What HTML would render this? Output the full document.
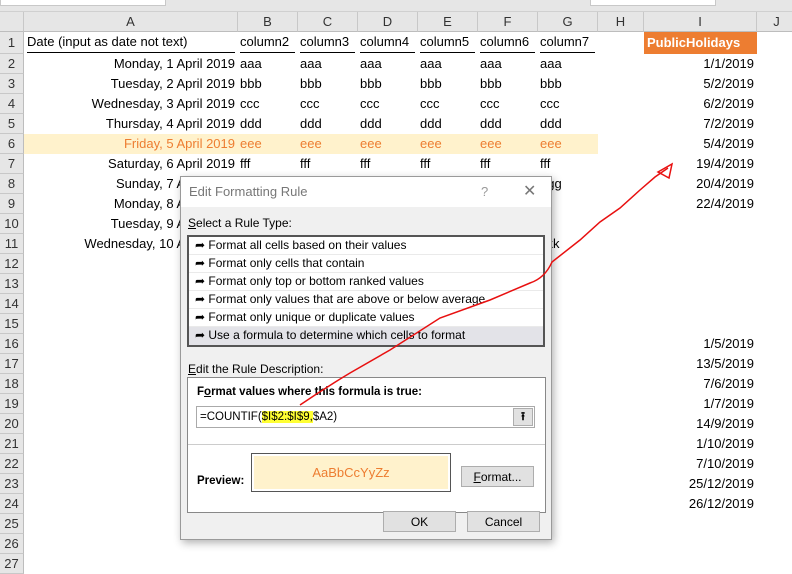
<!DOCTYPE html>
<html><head><meta charset="utf-8"><style>
*{margin:0;padding:0;box-sizing:border-box}
body{width:792px;height:563px;overflow:hidden;background:#fff;font-family:"Liberation Sans",Calibri,sans-serif;font-size:13px;color:#000;position:relative}
.top{position:absolute;left:0;top:0;width:792px;height:12px;background:#e6e6e6;border-bottom:1px solid #d0d0d0}
.top div{position:absolute;top:0;height:6px;background:#fff;border:1px solid #c8c8c8;border-top:none}
.hdr{position:absolute;top:12px;height:20px;background:#e6e6e6;border-right:1px solid #c8c8c8;border-bottom:1px solid #bdbdbd;text-align:center;line-height:20px;color:#333;font-size:13px}
.rh{position:absolute;left:0;width:24px;background:#e6e6e6;border-bottom:1px solid #c8c8c8;border-right:1px solid #bdbdbd;text-align:center;color:#333;font-size:13px}
.c{position:absolute;white-space:nowrap;font-size:13px;line-height:20px}
.r{text-align:right}
.dlg{position:absolute;left:180px;top:176px;width:372px;height:364px;background:#f0f0f0;border:1px solid #9a9a9a;box-shadow:2px 3px 8px rgba(0,0,0,.3)}
.dlg .tb{height:30px;background:#fff;color:#777;font-size:13px;line-height:30px;padding-left:8px}
.lst{position:absolute;left:6px;top:58px;width:358px;height:112px;border:2px solid #555;background:#fff}
.lst div{height:18px;line-height:17px;padding-left:6px;border-bottom:1px solid #eaeaea;font-size:12px}
.btn{position:absolute;background:#e1e1e1;border:1px solid #adadad;text-align:center;font-size:12px;line-height:20px}
</style></head><body>
<div class="top"><div style="left:0;width:166px"></div><div style="left:590px;width:126px"></div></div>
<div class="hdr" style="left:0;width:24px"></div>
<div class="hdr" style="left:24px;width:214px">A</div>
<div class="hdr" style="left:238px;width:60px">B</div>
<div class="hdr" style="left:298px;width:60px">C</div>
<div class="hdr" style="left:358px;width:60px">D</div>
<div class="hdr" style="left:418px;width:60px">E</div>
<div class="hdr" style="left:478px;width:60px">F</div>
<div class="hdr" style="left:538px;width:60px">G</div>
<div class="hdr" style="left:598px;width:46px">H</div>
<div class="hdr" style="left:644px;width:113px">I</div>
<div class="hdr" style="left:757px;width:40px">J</div>
<div class="rh" style="top:32px;height:22px;line-height:22px">1</div>
<div class="rh" style="top:54px;height:20px;line-height:20px">2</div>
<div class="rh" style="top:74px;height:20px;line-height:20px">3</div>
<div class="rh" style="top:94px;height:20px;line-height:20px">4</div>
<div class="rh" style="top:114px;height:20px;line-height:20px">5</div>
<div class="rh" style="top:134px;height:20px;line-height:20px">6</div>
<div class="rh" style="top:154px;height:20px;line-height:20px">7</div>
<div class="rh" style="top:174px;height:20px;line-height:20px">8</div>
<div class="rh" style="top:194px;height:20px;line-height:20px">9</div>
<div class="rh" style="top:214px;height:20px;line-height:20px">10</div>
<div class="rh" style="top:234px;height:20px;line-height:20px">11</div>
<div class="rh" style="top:254px;height:20px;line-height:20px">12</div>
<div class="rh" style="top:274px;height:20px;line-height:20px">13</div>
<div class="rh" style="top:294px;height:20px;line-height:20px">14</div>
<div class="rh" style="top:314px;height:20px;line-height:20px">15</div>
<div class="rh" style="top:334px;height:20px;line-height:20px">16</div>
<div class="rh" style="top:354px;height:20px;line-height:20px">17</div>
<div class="rh" style="top:374px;height:20px;line-height:20px">18</div>
<div class="rh" style="top:394px;height:20px;line-height:20px">19</div>
<div class="rh" style="top:414px;height:20px;line-height:20px">20</div>
<div class="rh" style="top:434px;height:20px;line-height:20px">21</div>
<div class="rh" style="top:454px;height:20px;line-height:20px">22</div>
<div class="rh" style="top:474px;height:20px;line-height:20px">23</div>
<div class="rh" style="top:494px;height:20px;line-height:20px">24</div>
<div class="rh" style="top:514px;height:20px;line-height:20px">25</div>
<div class="rh" style="top:534px;height:20px;line-height:20px">26</div>
<div class="rh" style="top:554px;height:20px;line-height:20px">27</div>

<div style="position:absolute;left:24px;top:134px;width:574px;height:20px;background:#fff2cc"></div>
<div style="position:absolute;left:644px;top:32px;width:113px;height:22px;background:#ed7d31"></div>
<div class="c" style="left:27px;top:32px;border-bottom:1px solid #000;width:208px">Date (input as date not text)</div>
<div class="c" style="left:240px;top:32px;border-bottom:1px solid #000;width:55px">column2</div>
<div class="c" style="left:300px;top:32px;border-bottom:1px solid #000;width:55px">column3</div>
<div class="c" style="left:360px;top:32px;border-bottom:1px solid #000;width:55px">column4</div>
<div class="c" style="left:420px;top:32px;border-bottom:1px solid #000;width:55px">column5</div>
<div class="c" style="left:480px;top:32px;border-bottom:1px solid #000;width:55px">column6</div>
<div class="c" style="left:540px;top:32px;border-bottom:1px solid #000;width:55px">column7</div>
<div class="c" style="left:647px;top:33px;color:#fff;font-weight:bold">PublicHolidays</div>

<div class="c r" style="left:24px;top:54px;width:211px">Monday, 1 April 2019</div>
<div class="c r" style="left:24px;top:74px;width:211px">Tuesday, 2 April 2019</div>
<div class="c r" style="left:24px;top:94px;width:211px">Wednesday, 3 April 2019</div>
<div class="c r" style="left:24px;top:114px;width:211px">Thursday, 4 April 2019</div>
<div class="c r" style="left:24px;top:134px;width:211px;color:#ed7d31">Friday, 5 April 2019</div>
<div class="c r" style="left:24px;top:154px;width:211px">Saturday, 6 April 2019</div>
<div class="c r" style="left:24px;top:174px;width:211px">Sunday, 7 April 2019</div>
<div class="c r" style="left:24px;top:194px;width:211px">Monday, 8 April 2019</div>
<div class="c r" style="left:24px;top:214px;width:211px">Tuesday, 9 April 2019</div>
<div class="c r" style="left:24px;top:234px;width:211px">Wednesday, 10 April 2019</div>

<div class="c" style="left:240px;top:54px">aaa</div><div class="c" style="left:300px;top:54px">aaa</div><div class="c" style="left:360px;top:54px">aaa</div><div class="c" style="left:420px;top:54px">aaa</div><div class="c" style="left:480px;top:54px">aaa</div><div class="c" style="left:540px;top:54px">aaa</div>
<div class="c" style="left:240px;top:74px">bbb</div><div class="c" style="left:300px;top:74px">bbb</div><div class="c" style="left:360px;top:74px">bbb</div><div class="c" style="left:420px;top:74px">bbb</div><div class="c" style="left:480px;top:74px">bbb</div><div class="c" style="left:540px;top:74px">bbb</div>
<div class="c" style="left:240px;top:94px">ccc</div><div class="c" style="left:300px;top:94px">ccc</div><div class="c" style="left:360px;top:94px">ccc</div><div class="c" style="left:420px;top:94px">ccc</div><div class="c" style="left:480px;top:94px">ccc</div><div class="c" style="left:540px;top:94px">ccc</div>
<div class="c" style="left:240px;top:114px">ddd</div><div class="c" style="left:300px;top:114px">ddd</div><div class="c" style="left:360px;top:114px">ddd</div><div class="c" style="left:420px;top:114px">ddd</div><div class="c" style="left:480px;top:114px">ddd</div><div class="c" style="left:540px;top:114px">ddd</div>
<div class="c" style="left:240px;top:134px;color:#ed7d31">eee</div><div class="c" style="left:300px;top:134px;color:#ed7d31">eee</div><div class="c" style="left:360px;top:134px;color:#ed7d31">eee</div><div class="c" style="left:420px;top:134px;color:#ed7d31">eee</div><div class="c" style="left:480px;top:134px;color:#ed7d31">eee</div><div class="c" style="left:540px;top:134px;color:#ed7d31">eee</div>
<div class="c" style="left:240px;top:154px">fff</div><div class="c" style="left:300px;top:154px">fff</div><div class="c" style="left:360px;top:154px">fff</div><div class="c" style="left:420px;top:154px">fff</div><div class="c" style="left:480px;top:154px">fff</div><div class="c" style="left:540px;top:154px">fff</div>
<div class="c" style="left:540px;top:174px">ggg</div>
<div class="c" style="left:540px;top:234px">kkk</div>

<div class="c r" style="left:644px;top:54px;width:110px">1/1/2019</div>
<div class="c r" style="left:644px;top:74px;width:110px">5/2/2019</div>
<div class="c r" style="left:644px;top:94px;width:110px">6/2/2019</div>
<div class="c r" style="left:644px;top:114px;width:110px">7/2/2019</div>
<div class="c r" style="left:644px;top:134px;width:110px">5/4/2019</div>
<div class="c r" style="left:644px;top:154px;width:110px">19/4/2019</div>
<div class="c r" style="left:644px;top:174px;width:110px">20/4/2019</div>
<div class="c r" style="left:644px;top:194px;width:110px">22/4/2019</div>
<div class="c r" style="left:644px;top:334px;width:110px">1/5/2019</div>
<div class="c r" style="left:644px;top:354px;width:110px">13/5/2019</div>
<div class="c r" style="left:644px;top:374px;width:110px">7/6/2019</div>
<div class="c r" style="left:644px;top:394px;width:110px">1/7/2019</div>
<div class="c r" style="left:644px;top:414px;width:110px">14/9/2019</div>
<div class="c r" style="left:644px;top:434px;width:110px">1/10/2019</div>
<div class="c r" style="left:644px;top:454px;width:110px">7/10/2019</div>
<div class="c r" style="left:644px;top:474px;width:110px">25/12/2019</div>
<div class="c r" style="left:644px;top:494px;width:110px">26/12/2019</div>

<div class="dlg">
<div class="tb">Edit Formatting Rule<span style="position:absolute;left:300px;color:#999">?</span><span style="position:absolute;left:342px;color:#777;font-size:16px">✕</span></div>
<div style="position:absolute;left:7px;top:39px;font-size:12px"><u>S</u>elect a Rule Type:</div>
<div class="lst">
<div>➦ Format all cells based on their values</div>
<div>➦ Format only cells that contain</div>
<div>➦ Format only top or bottom ranked values</div>
<div>➦ Format only values that are above or below average</div>
<div>➦ Format only unique or duplicate values</div>
<div style="background:#e3e3e8;border:none">➦ Use a formula to determine which cells to format</div>
</div>
<div style="position:absolute;left:7px;top:185px;font-size:12px"><u>E</u>dit the Rule Description:</div>
<div style="position:absolute;left:6px;top:200px;width:359px;height:136px;background:#fff;border:1px solid #888">
<div style="position:absolute;left:9px;top:8px;font-size:11.5px;font-weight:bold">F<u>o</u>rmat values where this formula is true:</div>
<div style="position:absolute;left:8px;top:28px;width:339px;height:22px;border:1px solid #aaa;font-size:11.5px;line-height:20px;padding-left:3px">=COUNTIF(<span style="background:#ffff33">$I$2:$I$9,</span>$A2)<div style="position:absolute;right:1px;top:1px;width:20px;height:18px;background:#e1e1e1;border:1px solid #adadad;text-align:center;line-height:16px;font-weight:bold">⭱</div></div>
<div style="position:absolute;left:0;top:66px;width:357px;border-top:1px solid #ccc"></div>
<div style="position:absolute;left:9px;top:97px;font-size:11.5px;font-weight:bold">Preview:</div>
<div style="position:absolute;left:63px;top:75px;width:200px;height:39px;border:1px solid #555;padding:2px"><div style="background:#fff2cc;height:33px;text-align:center;line-height:33px;color:#ed7d31;font-size:13px">AaBbCcYyZz</div></div>
<div class="btn" style="left:273px;top:88px;width:73px;height:21px"><u>F</u>ormat...</div>
</div>
<div class="btn" style="left:202px;top:334px;width:73px;height:21px">OK</div>
<div class="btn" style="left:286px;top:334px;width:73px;height:21px">Cancel</div>
</div>
<svg style="position:absolute;left:0;top:0" width="792" height="563">
<path d="M300 405 Q325 388 350 373 L390 350 L440 318 L490 300 L530 283 Q545 278 552 262 L580 240 L600 222 L620 208 L640 190 L655 177 L668 168" fill="none" stroke="#e81010" stroke-width="1.5"/>
<path d="M658 172 L672 164 L669 178 Z" fill="none" stroke="#e81010" stroke-width="1.5"/>
</svg>
</body></html>
